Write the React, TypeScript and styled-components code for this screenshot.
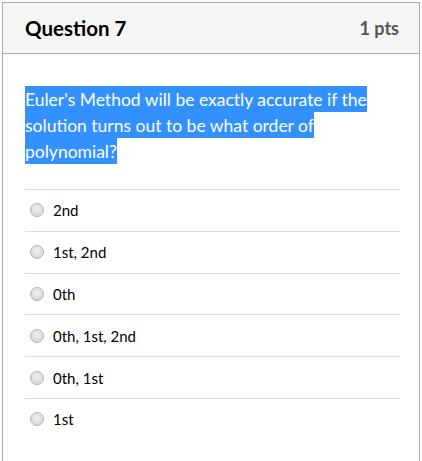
import styled, { createGlobalStyle } from "styled-components"

const GlobalStyle = createGlobalStyle`
  body {
    margin: 0;
    background: #fff;
    font-family: Lato, "Open Sans", sans-serif;
  }
`

const answers = ["2nd", "1st, 2nd", "0th", "0th, 1st, 2nd", "0th, 1st", "1st"]

const App = () => {
    return <Page>
        <GlobalStyle />
        <QuestionCard>
            <Header>
                <Title>Question 7</Title>
                <Points>1 pts</Points>
            </Header>
            <Body>
                <QuestionText>
                    <Highlight>Euler's Method will be exactly accurate if the solution turns out to be what order of polynomial?</Highlight>
                </QuestionText>
                <AnswerList>
                    {answers.map(answer => (
                        <AnswerRow key={answer}>
                            <Radio />
                            <AnswerLabel>{answer}</AnswerLabel>
                        </AnswerRow>
                    ))}
                </AnswerList>
            </Body>
        </QuestionCard>
    </Page>
}

const Page = styled.div`
    padding: 2px 0 0 2px;
    width: 418px;
`

const QuestionCard = styled.div`
    border: 1px solid #aaaaaa;
    border-bottom: none;
    min-height: 459px;
    box-sizing: border-box;
`

const Header = styled.div`
    display: flex;
    align-items: center;
    justify-content: space-between;
    height: 50px;
    padding: 0 20px 0 22px;
    background: #f5f5f5;
    border-bottom: 1px solid #aaaaaa;
`

const Title = styled.div`
    font-size: 20.5px;
    font-weight: 700;
    color: #000;
`

const Points = styled.div`
    font-size: 18px;
    font-weight: 700;
    color: #555555;
`

const Body = styled.div`
    padding: 0 19px 0 22px;
`

const QuestionText = styled.div`
    padding: 32px 0 25px;
    font-size: 17.5px;
    line-height: 26px;
    color: #fff;
`

const Highlight = styled.span`
    background: #3390ff;
    padding: 2.5px 0;
    box-decoration-break: clone;
    -webkit-box-decoration-break: clone;
`

const AnswerList = styled.div`
    display: flex;
    flex-direction: column;
`

const AnswerRow = styled.div`
    display: flex;
    align-items: center;
    height: 41.8px;
    border-top: 1px solid #dcdcdc;
    box-sizing: border-box;
    padding-left: 5px;
`

const Radio = styled.span`
    width: 12px;
    height: 12px;
    border-radius: 50%;
    border: 1px solid #b4b4b4;
    background: radial-gradient(circle at 50% 40%, #f0f0f0 0%, #dcdcdc 60%, #cfcfcf 100%);
    margin-right: 9px;
    flex-shrink: 0;
`

const AnswerLabel = styled.span`
    font-size: 15px;
    color: #000;
`

export default App
